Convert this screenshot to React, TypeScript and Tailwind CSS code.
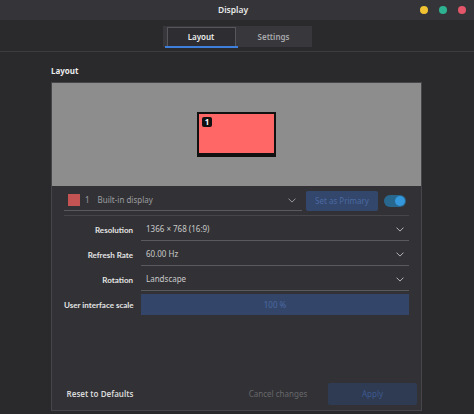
import React from "react";

const FONT = { fontFamily: '"Noto Sans", "Open Sans", sans-serif' };
const LABEL_FONT = { fontFamily: 'Lato, "Noto Sans", sans-serif' };

function Chevron({ className = "" }: { className?: string }) {
  return (
    <svg viewBox="0 0 10 6" className={`w-[8px] h-[5px] ${className}`} fill="none">
      <path d="M1 1l4 4 4-4" stroke="currentColor" strokeWidth="1.2" strokeLinecap="round" strokeLinejoin="round" />
    </svg>
  );
}

function RowLabel({ children }: { children: React.ReactNode }) {
  return (
    <div
      className="w-[77px] text-right text-[8px] font-bold text-[#e4e4e4] pr-[8px] leading-none whitespace-nowrap"
      style={LABEL_FONT}
    >
      {children}
    </div>
  );
}

function SelectRow({ label, value }: { label: string; value: string }) {
  return (
    <div className="flex items-center h-[25px]">
      <RowLabel>{label}</RowLabel>
      <div className="flex-1 h-[22px] flex items-center justify-between pl-[5px] pr-[5px] border-b border-[#5a5a5e] text-[8px] text-[#c9c9c9]">
        <span>{value}</span>
        <Chevron className="text-[#bdbdbd]" />
      </div>
    </div>
  );
}

export default function App() {
  return (
    <div className="w-[474px] h-[414px] bg-[#2a2a2d] flex flex-col overflow-hidden" style={FONT}>
      {/* Title bar */}
      <div className="h-[20px] bg-[#353539] flex items-center shrink-0">
        <div className="flex-1" />
        <div className="w-[120px] text-center text-[8.5px] font-semibold text-[#e8e8e8] leading-none">Display</div>
        <div className="flex-1 flex items-center justify-end gap-[11px] pr-[8px]">
          <span className="w-[8px] h-[8px] rounded-full bg-[#f2c233]" />
          <span className="w-[8px] h-[8px] rounded-full bg-[#2db391]" />
          <span className="w-[8px] h-[8px] rounded-full bg-[#e5566a]" />
        </div>
      </div>

      {/* Tabs */}
      <div className="h-[32px] shrink-0 border-b border-[#3c3c40] flex justify-center pt-[6px]">
        <div className="flex h-[21px] bg-[#38383c] pl-[4px]">
          <div className="relative w-[69px] h-[20px] mt-[1px] border border-[#57575b] bg-[#2e2e32] flex items-center justify-center text-[8px] font-semibold text-[#ececec]">
            Layout
            <span className="absolute left-[-3px] right-[-3px] bottom-[-2px] h-[2px] bg-[#3e7fdc]" />
          </div>
          <div className="w-[76px] flex items-center justify-center text-[8px] font-semibold text-[#a9a9ad]">Settings</div>
        </div>
      </div>

      {/* Content */}
      <div className="flex-1 flex flex-col pl-[51px] pr-[52px] pb-[3px]">
        <div className="h-[30px] flex items-end pb-[7px] text-[8px] font-bold text-[#ececec] leading-none">Layout</div>
        <div className="flex-1 border border-[#46464a] bg-[#323236] flex flex-col">
          {/* Preview */}
          <div className="h-[103px] bg-[#8d8d8d] flex items-center justify-center">
            <div className="w-[79px] h-[45px] bg-[#ff6666] border-2 border-b-[4px] border-[#111] pl-[3px] pt-[3px]">
              <div className="w-[10px] h-[10px] rounded-[2px] bg-[#111] flex items-center justify-center text-[8px] font-bold text-white leading-none">1</div>
            </div>
          </div>

          <div className="flex flex-col px-[12px]">
            {/* Display selector */}
            <div className="flex items-center h-[26px] pt-[3px]">
              <div className="w-[238px] h-[21px] flex items-center border-b border-[#5a5a5e] pl-[4px] pr-[6px]">
                <span className="w-[12px] h-[12px] bg-[#c45454]" />
                <span className="ml-[5px] text-[8px] text-[#9d9da1]">1</span>
                <span className="ml-[8px] text-[8px] text-[#9d9da1]">Built-in display</span>
                <span className="flex-1" />
                <Chevron className="text-[#9d9da1]" />
              </div>
              <div className="ml-[4px] w-[72px] h-[20px] rounded-[2px] bg-[#33466b] flex items-center justify-center text-[8px] text-[#4b6aa3]">Set as Primary</div>
              <div className="ml-[6px] w-[22px] h-[12px] rounded-full bg-[#28688f] flex items-center justify-end pr-[1px]">
                <span className="w-[10px] h-[10px] rounded-full bg-[#3597dc]" />
              </div>
            </div>
            <div className="h-[4px] border-b border-[#46464a]" />

            <div className="pt-[1px]">
              <SelectRow label="Resolution" value="1366 × 768 (16:9)" />
              <SelectRow label="Refresh Rate" value="60.00 Hz" />
              <SelectRow label="Rotation" value="Landscape" />
              <div className="flex items-center h-[25px]">
                <RowLabel>User interface scale</RowLabel>
                <div className="flex-1 h-[21px] bg-[#33466a] flex items-center justify-center text-[8px] text-[#4a68a0]">100 %</div>
              </div>
            </div>
          </div>

          <div className="flex-1" />

          {/* Footer */}
          <div className="flex items-center h-[22px] mb-[5px] pl-[4px] pr-[4px]">
            <div className="w-[88px] h-[22px] flex items-center justify-center text-[8px] font-semibold text-[#d8d8d8]">Reset to Defaults</div>
            <div className="flex-1" />
            <div className="w-[90px] text-center text-[8px] text-[#67676b]">Cancel changes</div>
            <div className="ml-[5px] w-[89px] h-[22px] rounded-[2px] bg-[#2f3b53] flex items-center justify-center text-[8px] text-[#3d5a8f]">Apply</div>
          </div>
        </div>
      </div>
    </div>
  );
}
